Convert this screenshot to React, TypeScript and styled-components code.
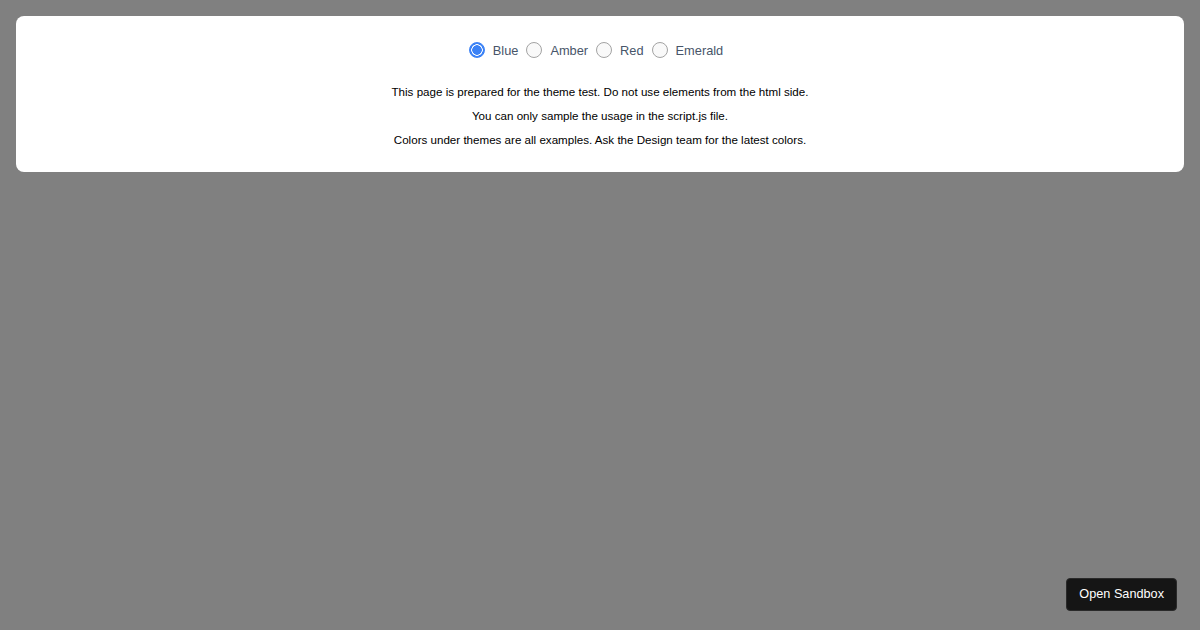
import { useState } from "react";
import styled, { createGlobalStyle } from "styled-components";

const GlobalStyle = createGlobalStyle`
  html, body {
    margin: 0;
    padding: 0;
    background: #808080;
    font-family: "Liberation Sans", Arial, sans-serif;
  }
`;

const Page = styled.div`
  min-height: 630px;
  padding: 16px;
  box-sizing: border-box;
`;

const Card = styled.div`
  background: #ffffff;
  border-radius: 8px;
  padding: 24px 24px 23px;
  display: flex;
  flex-direction: column;
  align-items: center;
  gap: 23px;
`;

const ThemeGroup = styled.div`
  display: flex;
  align-items: center;
  gap: 8px;
  height: 20px;
  padding-right: 8px;
`;

const ThemeOption = styled.label`
  display: flex;
  align-items: center;
  gap: 8px;
  font-size: 12.8px;
  color: #475569;
  cursor: pointer;
`;

const Radio = styled.input`
  appearance: none;
  box-sizing: border-box;
  width: 16px;
  height: 16px;
  margin: 0;
  border-radius: 50%;
  border: 1px solid #a3a3a3;
  background: #f9f9f9;
  cursor: pointer;

  &:checked {
    border-color: #3b82f6;
    background: radial-gradient(circle, #3b82f6 0 4.5px, #ffffff 5px 5.5px, #3b82f6 6px);
  }
`;

const Notes = styled.div`
  display: flex;
  flex-direction: column;
  align-items: center;
  gap: 6px;
`;

const Note = styled.p`
  margin: 0;
  font-size: 11.6px;
  line-height: 18px;
  color: #000000;
`;

const SandboxButton = styled.button`
  position: fixed;
  right: 23px;
  bottom: 19px;
  padding: 7px 12px;
  line-height: 17px;
  font-family: "Liberation Sans", Arial, sans-serif;
  font-size: 12.7px;
  color: #ffffff;
  background: #151515;
  border: 1px solid #2a2a2a;
  border-radius: 4px;
  cursor: pointer;
`;

const themes = ["Blue", "Amber", "Red", "Emerald"];

function App() {
  const [theme, setTheme] = useState("Blue");

  return (
    <Page>
      <GlobalStyle />
      <Card>
        <ThemeGroup>
          {themes.map((name) => (
            <ThemeOption key={name}>
              <Radio
                type="radio"
                name="theme"
                checked={theme === name}
                onChange={() => setTheme(name)}
              />
              {name}
            </ThemeOption>
          ))}
        </ThemeGroup>
        <Notes>
          <Note>
            This page is prepared for the theme test. Do not use elements from
            the html side.
          </Note>
          <Note>You can only sample the usage in the script.js file.</Note>
          <Note>
            Colors under themes are all examples. Ask the Design team for the
            latest colors.
          </Note>
        </Notes>
      </Card>
      <SandboxButton>Open Sandbox</SandboxButton>
    </Page>
  );
}

export default App;
